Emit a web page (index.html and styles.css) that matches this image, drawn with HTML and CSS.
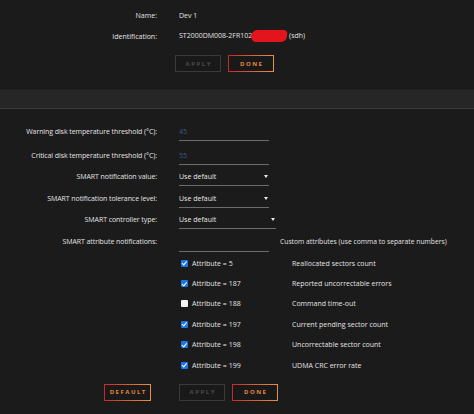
FILE: index.html
```html
<!DOCTYPE html>
<html>
<head>
<meta charset="utf-8">
<link rel="stylesheet" href="styles.css">
</head>
<body>
<div class="page">
  <section class="top">
    <div class="row">
      <span class="lbl">Name:</span>
      <span class="val">Dev 1</span>
    </div>
    <div class="row">
      <span class="lbl">Identification:</span>
      <span class="val">ST2000DM008-2FR102<span class="redact"></span> (sdh)</span>
    </div>
    <div class="actions top-actions">
      <button class="btn disabled">APPLY</button>
      <button class="btn primary">DONE</button>
    </div>
  </section>

  <div class="band"></div>

  <section class="settings">
    <div class="row field first">
      <span class="lbl">Warning disk temperature threshold (°C):</span>
      <span class="input num">45</span>
    </div>
    <div class="row field">
      <span class="lbl">Critical disk temperature threshold (°C):</span>
      <span class="input num">55</span>
    </div>
    <div class="row field">
      <span class="lbl">SMART notification value:</span>
      <span class="input select">Use default<i class="caret"></i></span>
    </div>
    <div class="row field">
      <span class="lbl">SMART notification tolerance level:</span>
      <span class="input select">Use default<i class="caret"></i></span>
    </div>
    <div class="row field">
      <span class="lbl">SMART controller type:</span>
      <span class="input select wide">Use default<i class="caret"></i></span>
    </div>
    <div class="row field">
      <span class="lbl">SMART attribute notifications:</span>
      <span class="attr-line"><span class="input empty"></span><span class="hint">Custom attributes (use comma to separate numbers)</span></span>
    </div>

    <div class="checks">
      <div class="check"><span class="box on"></span><span class="attr">Attribute = 5</span><span class="desc">Reallocated sectors count</span></div>
      <div class="check"><span class="box on"></span><span class="attr">Attribute = 187</span><span class="desc">Reported uncorrectable errors</span></div>
      <div class="check"><span class="box"></span><span class="attr">Attribute = 188</span><span class="desc">Command time-out</span></div>
      <div class="check"><span class="box on"></span><span class="attr">Attribute = 197</span><span class="desc">Current pending sector count</span></div>
      <div class="check"><span class="box on"></span><span class="attr">Attribute = 198</span><span class="desc">Uncorrectable sector count</span></div>
      <div class="check"><span class="box on"></span><span class="attr">Attribute = 199</span><span class="desc">UDMA CRC error rate</span></div>
    </div>

    <div class="actions bottom-actions">
      <button class="btn primary default">DEFAULT</button>
      <button class="btn disabled">APPLY</button>
      <button class="btn primary">DONE</button>
    </div>
  </section>
</div>
</body>
</html>
```
FILE: styles.css
```css
html, body {
  margin: 0;
  padding: 0;
  background: #1c1b1c;
}
body {
  width: 474px;
  height: 414px;
  overflow: hidden;
  font-family: "Open Sans", "Noto Sans", "Liberation Sans", sans-serif;
  font-size: 7px;
  color: #e2e2e2;
}
.page {
  display: flex;
  flex-direction: column;
}
.row {
  display: grid;
  grid-template-columns: 157px 1fr;
  column-gap: 22px;
  align-items: center;
}
.lbl {
  text-align: right;
  white-space: nowrap;
}
.val {
  white-space: nowrap;
}

/* top */
.top {
  padding-top: 4.5px;
  height: 88.5px;
  box-sizing: border-box;
}
.top .row {
  height: 21px;
}
.redact {
  display: inline-block;
  width: 36px;
  height: 12px;
  background: #e3141b;
  border-radius: 7px 5px 6px 8px;
  vertical-align: middle;
  margin-left: -1px;
  transform: skewX(-8deg);
}

.actions {
  display: flex;
  gap: 7px;
}
.top-actions {
  margin-top: 8.5px;
  padding-left: 175px;
}
.btn {
  width: 46px;
  height: 17px;
  box-sizing: border-box;
  padding: 0 0 0 1.5px;
  margin: 0;
  font-family: "Open Sans", "Liberation Sans", sans-serif;
  font-weight: 700;
  font-size: 6px;
  letter-spacing: 1.5px;
  background: #1a1919;
  color: #e08a3c;
  border: 1px solid #e07a3a;
}
.btn.primary {
  border-image: linear-gradient(to right, #c42a2e, #e5923f) 1;
}
.btn.disabled {
  color: #4a4a4a;
  border: 1px solid #3a3a3a;
}

/* band */
.band {
  height: 18px;
  background: #262626;
  border-top: 1px solid #212121;
  border-bottom: 1px solid #3b3b3b;
}

/* settings */
.settings {
  padding-top: 12px;
}
.settings .lbl {
  letter-spacing: -0.08px;
}
.field {
  height: 21.5px;
}
.field.first {
  margin-bottom: 2.5px;
}
.input {
  position: relative;
  display: block;
  width: 90px;
  height: 19px;
  line-height: 19px;
  box-sizing: border-box;
  border-bottom: 1px solid #6c6c6c;
}
.input.num {
  color: #42548e;
}
.input.select {
  color: #e8e8e8;
}
.input.wide {
  width: 97px;
}
.caret {
  position: absolute;
  right: 1px;
  top: 8px;
  width: 0;
  height: 0;
  border-left: 2px solid transparent;
  border-right: 2px solid transparent;
  border-top: 3px solid #ececec;
}
.attr-line {
  display: flex;
  align-items: center;
}
.attr-line .input {
  flex: none;
  height: 17px;
  margin-top: 4px;
}
.hint {
  margin-left: 11px;
  white-space: nowrap;
  font-size: 6.75px;
}

.checks {
  margin-top: 1px;
  padding-left: 181px;
  display: flex;
  flex-direction: column;
}
.check {
  height: 20.4px;
  display: flex;
  align-items: center;
}
.box {
  width: 7px;
  height: 7px;
  flex: none;
  background: #f4f4f4;
  border-radius: 1px;
  position: relative;
}
.box.on {
  background: #1b74e8;
}
.box.on::after {
  content: "";
  position: absolute;
  left: 2.2px;
  top: 0.6px;
  width: 1.6px;
  height: 3.6px;
  border-right: 1.2px solid #fff;
  border-bottom: 1.2px solid #fff;
  transform: rotate(40deg);
}
.attr {
  margin-left: 4px;
  width: 100px;
  white-space: nowrap;
}
.desc {
  white-space: nowrap;
}

.bottom-actions {
  margin-top: 8.6px;
  padding-left: 104px;
}
.btn.default {
  margin-right: 21px;
  width: 47px;
}
```
